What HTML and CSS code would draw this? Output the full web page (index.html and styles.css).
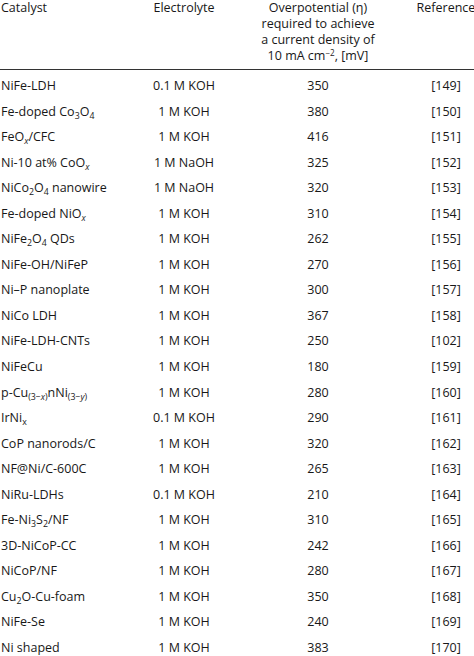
FILE: index.html
```html
<!DOCTYPE html>
<html>
<head>
<meta charset="utf-8">
<link rel="stylesheet" href="styles.css">
</head>
<body>
<div class="table">
  <div class="head">
    <div class="c1">Catalyst</div>
    <div class="c2">Electrolyte</div>
    <div class="c3">Overpotential (η)<br>required to achieve<br>a current density of<br>10 mA cm<span class="sup">−2</span>, [mV]</div>
    <div class="c4">Reference</div>
  </div>
  <div class="body">
    <div class="row"><div class="c1">NiFe-LDH</div><div class="c2">0.1 M KOH</div><div class="c3">350</div><div class="c4">[149]</div></div>
    <div class="row"><div class="c1">Fe-doped Co<span class="sub">3</span>O<span class="sub">4</span></div><div class="c2">1 M KOH</div><div class="c3">380</div><div class="c4">[150]</div></div>
    <div class="row"><div class="c1">FeO<span class="sub it">x</span>/CFC</div><div class="c2">1 M KOH</div><div class="c3">416</div><div class="c4">[151]</div></div>
    <div class="row"><div class="c1">Ni-10 at% CoO<span class="sub it">x</span></div><div class="c2">1 M NaOH</div><div class="c3">325</div><div class="c4">[152]</div></div>
    <div class="row"><div class="c1">NiCo<span class="sub">2</span>O<span class="sub">4</span> nanowire</div><div class="c2">1 M NaOH</div><div class="c3">320</div><div class="c4">[153]</div></div>
    <div class="row"><div class="c1">Fe-doped NiO<span class="sub it">x</span></div><div class="c2">1 M KOH</div><div class="c3">310</div><div class="c4">[154]</div></div>
    <div class="row"><div class="c1">NiFe<span class="sub">2</span>O<span class="sub">4</span> QDs</div><div class="c2">1 M KOH</div><div class="c3">262</div><div class="c4">[155]</div></div>
    <div class="row"><div class="c1">NiFe-OH/NiFeP</div><div class="c2">1 M KOH</div><div class="c3">270</div><div class="c4">[156]</div></div>
    <div class="row"><div class="c1">Ni–P nanoplate</div><div class="c2">1 M KOH</div><div class="c3">300</div><div class="c4">[157]</div></div>
    <div class="row"><div class="c1">NiCo LDH</div><div class="c2">1 M KOH</div><div class="c3">367</div><div class="c4">[158]</div></div>
    <div class="row"><div class="c1">NiFe-LDH-CNTs</div><div class="c2">1 M KOH</div><div class="c3">250</div><div class="c4">[102]</div></div>
    <div class="row"><div class="c1">NiFeCu</div><div class="c2">1 M KOH</div><div class="c3">180</div><div class="c4">[159]</div></div>
    <div class="row"><div class="c1">p-Cu<span class="sub">(3−<i>x</i>)</span>nNi<span class="sub">(3−<i>y</i>)</span></div><div class="c2">1 M KOH</div><div class="c3">280</div><div class="c4">[160]</div></div>
    <div class="row"><div class="c1">IrNi<span class="sub">x</span></div><div class="c2">0.1 M KOH</div><div class="c3">290</div><div class="c4">[161]</div></div>
    <div class="row"><div class="c1">CoP nanorods/C</div><div class="c2">1 M KOH</div><div class="c3">320</div><div class="c4">[162]</div></div>
    <div class="row"><div class="c1">NF@Ni/C-600C</div><div class="c2">1 M KOH</div><div class="c3">265</div><div class="c4">[163]</div></div>
    <div class="row"><div class="c1">NiRu-LDHs</div><div class="c2">0.1 M KOH</div><div class="c3">210</div><div class="c4">[164]</div></div>
    <div class="row"><div class="c1">Fe-Ni<span class="sub">3</span>S<span class="sub">2</span>/NF</div><div class="c2">1 M KOH</div><div class="c3">310</div><div class="c4">[165]</div></div>
    <div class="row"><div class="c1">3D-NiCoP-CC</div><div class="c2">1 M KOH</div><div class="c3">242</div><div class="c4">[166]</div></div>
    <div class="row"><div class="c1">NiCoP/NF</div><div class="c2">1 M KOH</div><div class="c3">280</div><div class="c4">[167]</div></div>
    <div class="row"><div class="c1">Cu<span class="sub">2</span>O-Cu-foam</div><div class="c2">1 M KOH</div><div class="c3">350</div><div class="c4">[168]</div></div>
    <div class="row"><div class="c1">NiFe-Se</div><div class="c2">1 M KOH</div><div class="c3">240</div><div class="c4">[169]</div></div>
    <div class="row"><div class="c1">Ni shaped</div><div class="c2">1 M KOH</div><div class="c3">383</div><div class="c4">[170]</div></div>
  </div>
</div>
</body>
</html>
```
FILE: styles.css
```css
html, body {
  margin: 0;
  padding: 0;
  background: #ffffff;
  overflow: hidden;
}
body {
  font-family: "Open Sans", "DejaVu Sans", sans-serif;
  font-size: 12.5px;
  color: #181818;
  width: 474px;
  height: 656px;
}
.table {
  width: 494px;
}
.head, .row {
  display: grid;
  grid-template-columns: 130px 108px 160px 96px;
}
.head {
  line-height: 16px;
  padding-top: 0;
  padding-bottom: 5px;
  border-bottom: 1.5px solid #333333;
}
.body {
  padding-top: 3px;
}
.row {
  height: 25.56px;
  line-height: 25.56px;
}
.c1 {
  padding-left: 1px;
  white-space: nowrap;
}
.c2, .c3, .c4 {
  text-align: center;
  white-space: nowrap;
}
.sub {
  font-size: 0.7em;
  vertical-align: -0.3em;
  line-height: 0;
}
.sup {
  font-size: 0.65em;
  vertical-align: 0.45em;
  line-height: 0;
}
.it {
  font-style: italic;
}
```
